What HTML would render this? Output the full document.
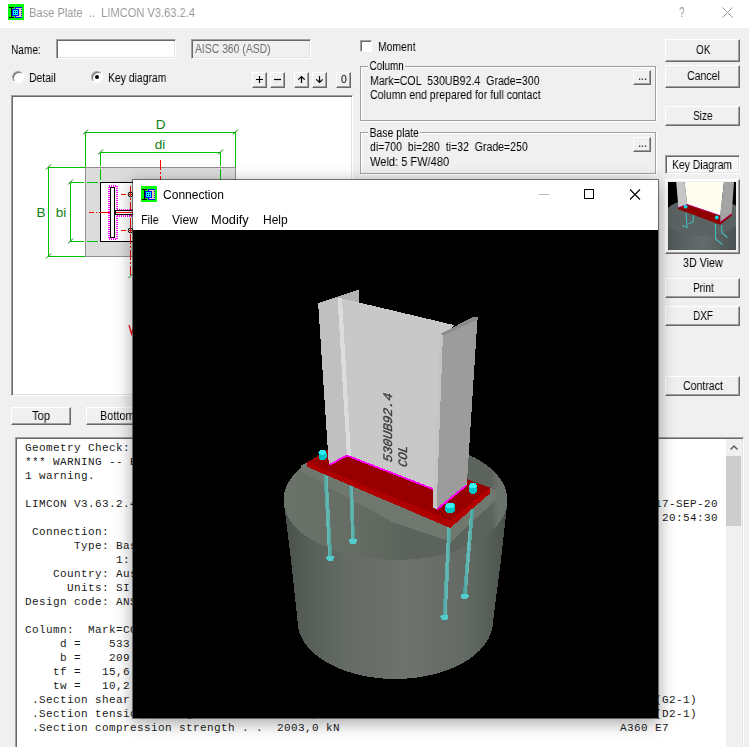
<!DOCTYPE html>
<html>
<head>
<meta charset="utf-8">
<title>Base Plate .. LIMCON V3.63.2.4</title>
<style>
html,body{margin:0;padding:0;}
body{width:749px;height:747px;overflow:hidden;background:#f0f0f0;position:relative;font-family:"Liberation Sans",sans-serif;font-size:12.5px;color:#000;}
.abs{position:absolute;}
.t{position:absolute;white-space:pre;transform-origin:0 0;will-change:transform;}
#titlebar{left:0;top:0;width:749px;height:28px;background:#fff;}
.btn{position:absolute;box-sizing:border-box;background:#f0f0f0;
 border:1px solid;border-color:#fff #696969 #696969 #fff;box-shadow:inset -1px -1px 0 #a0a0a0, inset 1px 1px 0 #f0f0f0;}
.sunk{position:absolute;box-sizing:border-box;background:#fff;border:1px solid;border-color:#a0a0a0 #fff #fff #a0a0a0;box-shadow:inset 1px 1px 0 #696969, inset -1px -1px 0 #e3e3e3;}
.grp{position:absolute;box-sizing:border-box;border:1px solid #a0a0a0;box-shadow:1px 1px 0 #fff, inset 1px 1px 0 #fff;}
.radio{position:absolute;width:12px;height:12px;box-sizing:border-box;border-radius:50%;background:#fff;border:1px solid;border-color:#a0a0a0 #fff #fff #a0a0a0;box-shadow:inset 1px 1px 0 #696969;}
.mono{font-family:"Liberation Mono",monospace;font-size:11px;letter-spacing:0.399px;line-height:14px;white-space:pre;color:#1a1a1a;}
</style>
</head>
<body>
<!-- title bar -->
<div id="titlebar" class="abs"></div>
<svg class="abs" style="left:8px;top:4px" width="16" height="16" viewBox="0 0 16 16" shape-rendering="crispEdges">
<rect width="16" height="16" fill="#00ff00"/>
<rect x="7" y="3" width="7" height="11" fill="#0000ff"/>
<rect x="8" y="4" width="5" height="9" fill="#d8d0b0"/>
<rect x="13" y="4" width="1" height="1" fill="#d8d0b0"/><rect x="13" y="6" width="1" height="1" fill="#d8d0b0"/><rect x="13" y="8" width="1" height="1" fill="#d8d0b0"/><rect x="13" y="10" width="1" height="1" fill="#d8d0b0"/><rect x="13" y="12" width="1" height="1" fill="#d8d0b0"/>
<rect x="4" y="5" width="7" height="7" fill="#0000ff"/>
<rect x="5" y="6" width="5" height="5" fill="#00ffff"/>
<rect x="6" y="7" width="1" height="1" fill="#000080"/><rect x="8" y="7" width="1" height="1" fill="#000080"/><rect x="6" y="9" width="1" height="1" fill="#000080"/><rect x="8" y="9" width="1" height="1" fill="#000080"/>
<rect x="1" y="3" width="5" height="1" fill="#000"/><rect x="3" y="4" width="1" height="9" fill="#000"/><rect x="1" y="13" width="5" height="1" fill="#000"/>
</svg>
<svg class="abs" style="left:722px;top:7px" width="12" height="12"><path d="M0.5 0.5L10.5 10.5M10.5 0.5L0.5 10.5" stroke="#999" stroke-width="1" fill="none"/></svg>

<!-- row 1 -->
<div class="sunk" style="left:56px;top:39px;width:120px;height:20px"></div>
<div class="sunk" style="left:191px;top:39px;width:120px;height:20px;background:#f0f0f0"></div>

<!-- radios -->
<div class="radio" style="left:12px;top:71px"></div>
<div class="radio" style="left:91px;top:71px"></div>
<div class="abs" style="left:95px;top:75px;width:4px;height:4px;background:#000;border-radius:50%"></div>

<!-- small buttons -->
<div class="btn" style="left:252px;top:72px;width:15px;height:16px"></div>
<div class="btn" style="left:270px;top:72px;width:15px;height:16px"></div>
<div class="btn" style="left:294px;top:72px;width:15px;height:16px"></div>
<div class="btn" style="left:312px;top:72px;width:15px;height:16px"></div>
<div class="btn" style="left:336px;top:72px;width:15px;height:16px"></div>
<svg class="abs" style="left:252px;top:72px" width="100" height="16" viewBox="252 72 100 16">
<g stroke="#000" stroke-width="1.2" fill="none">
<path d="M256 79.500h7M259.500 76v7"/>
<path d="M274 79.500h7"/>
<path d="M301.500 76.500v6.500M298.300 79.700l3.200-3.200l3.200 3.200"/>
<path d="M319.500 76v6.500M316.300 79.300l3.200 3.200l3.200-3.200"/>
</g>
</svg>

<!-- drawing panel -->
<div class="sunk" style="left:11px;top:95px;width:342px;height:301px"></div>
<svg id="keydiag" class="abs" style="left:13px;top:97px" width="338" height="297" viewBox="13 97 338 297">
<g shape-rendering="crispEdges" fill="none">
<rect x="85.500" y="167.500" width="150" height="89" fill="#dcdcdc" stroke="#909090"/>
<rect x="100.500" y="182.500" width="120" height="59" fill="#fff" stroke="#000"/>
<g stroke="#00c000">
<path d="M85 132.500H236M85.500 132V167M235.500 132V167"/>
<path d="M100 152.500H221M100.500 152V166M220.500 152V166M100.500 169V180M220.500 169V180"/>
<path d="M48.500 167V257M48 167.500H85M48 256.500H85"/>
<path d="M70.500 182V242M70 182.500H84M70 241.500H84M87 182.500H98M87 241.500H98"/>
</g>
<g stroke="#ff0000">
<path d="M160.500 160V300" stroke-dasharray="10 2 2 2"/>
<path d="M89 212.500H240" stroke-dasharray="5 2 1 2 30 2 1 2"/>
<path d="M130.500 186V275" stroke-dasharray="10 2 2 2"/>
<path d="M121 194.500H126M121 230.500H126"/>
</g>
<rect x="108.500" y="185.500" width="8" height="53" stroke="#ff00ff" stroke-width="2" stroke-dasharray="1 1"/>
<path d="M117 209.500H133M117 215.500H133" stroke="#ff00ff" stroke-width="2" stroke-dasharray="1 1"/>
<rect x="110.500" y="187.500" width="4" height="50" fill="#fff" stroke="#000"/>
<rect x="115" y="210.500" width="20" height="4" fill="#fff" stroke="#000"/>
<path d="M116 212.500H133" stroke="#ff0000"/>
</g>
<g fill="none" stroke="#000" stroke-width="1">
<circle cx="130.500" cy="194.500" r="2.300"/><circle cx="130.500" cy="230.500" r="2.300"/>
</g>
<g fill="none" stroke="#ff0000" stroke-width="1" shape-rendering="crispEdges"><path d="M129 194.500h3M129 230.500h3M130.500 193v3M130.500 229v3"/></g>
<g stroke="#008000" stroke-width="1" fill="none">
<path d="M83 134.500l5-5M233 134.500l5-5M98 154.500l5-5M218 154.500l5-5M46 169.500l5-5M46 258.500l5-5M68 184.500l5-5M68 243.500l5-5M128.500 278l4-4"/>
</g>
<path d="M129 325l2.500 9l2.500-9" stroke="#ff0000" stroke-width="1.200" fill="none"/>
<g font-family="Liberation Sans, sans-serif" font-size="13.500" fill="#108010" text-anchor="middle">
<text x="160.500" y="129">D</text>
<text x="160" y="149">di</text>
<text x="41" y="217">B</text>
<text x="61" y="217">bi</text>
</g>
</svg>

<!-- right side -->
<div class="abs" style="left:360px;top:40px;width:12px;height:12px;box-sizing:border-box;background:#fff;border:1px solid;border-color:#a0a0a0 #fff #fff #a0a0a0;box-shadow:inset 1px 1px 0 #696969"></div>
<div class="grp" style="left:360px;top:66px;width:296px;height:55px"></div>
<div class="btn" style="left:633px;top:70px;width:18px;height:15px"></div>
<div class="grp" style="left:360px;top:132px;width:296px;height:42px"></div>
<div class="btn" style="left:633px;top:137px;width:18px;height:15px"></div>

<div class="btn" style="left:665px;top:39px;width:75px;height:23px"></div>
<div class="btn" style="left:665px;top:65px;width:75px;height:23px"></div>
<div class="btn" style="left:665px;top:106px;width:75px;height:20px"></div>
<div class="sunk" style="left:665px;top:155px;width:75px;height:19px;background:#f8f8f8"></div>
<div class="btn" style="left:665px;top:179px;width:75px;height:75px;box-shadow:inset -1px -1px 0 #a0a0a0, inset 1px 1px 0 #fff, inset 2px 2px 0 #f0f0f0"></div>
<svg class="abs" style="left:668px;top:182px" width="68" height="68" viewBox="0 0 68 68">
<defs><linearGradient id="tc" x1="0" y1="0" x2="68" y2="0" gradientUnits="userSpaceOnUse"><stop offset="0" stop-color="#505656"/><stop offset="0.5" stop-color="#646c6c"/><stop offset="1" stop-color="#4c5252"/></linearGradient></defs>
<rect width="68" height="68" fill="#000"/>
<path d="M0 26C4 22 8 20.500 12 20L56 20C62 21 65 22 68 23.500V68H0Z" fill="#5a6262"/>
<path d="M0 44C10 52 30 56 50 52C58 50 64 47 68 44V68H0Z" fill="url(#tc)"/>
<g stroke="#40c8c8" stroke-width="1.100" fill="none" opacity="0.900">
<path d="M18 30.500L19 45.500L14 43.500"/>
<path d="M25.500 33L25 40L20.500 42"/>
<path d="M47.500 42L47.500 57L54.500 62.500"/>
<path d="M53.500 43L54 51L59.500 55.500"/>
</g>
<polygon points="8.200,0 16.500,0 19.200,22.300 10.400,25.500" fill="#c6c6c6"/>
<polygon points="16.500,0 56,0 52.200,33.500 19.200,22.300" fill="#fffcf0"/>
<polygon points="56,0 66,0 63.700,31.500 52.200,40 52.200,33.500" fill="#a4a4a4"/>
<polygon points="9.900,25.800 19.200,22.300 52.200,33.500 52.200,40 63.700,31.500 63.700,33.500 52.200,42.800 9.900,27" fill="#8e0000"/>
<path d="M10.400 25.500L19.200 22.300L52.200 33.500M52.200 40L63.700 31.500" stroke="#ff00ff" stroke-width="0.800" stroke-dasharray="1 1" fill="none"/>
<circle cx="17.600" cy="24.700" r="1.900" fill="#00e0e0"/>
<circle cx="48.800" cy="35.500" r="1.900" fill="#00e0e0"/>
</svg>
<div class="btn" style="left:665px;top:278px;width:75px;height:20px"></div>
<div class="btn" style="left:665px;top:306px;width:75px;height:20px"></div>
<div class="btn" style="left:665px;top:376px;width:75px;height:20px"></div>

<div class="btn" style="left:11px;top:407px;width:60px;height:18px"></div>
<div class="btn" style="left:86px;top:407px;width:60px;height:18px"></div>
<div class="t" style="left:29.00px;top:5.84px;font-size:12px;line-height:14px;height:14px;transform:scaleX(0.9252);color:#999;">Base Plate  ..  LIMCON V3.63.2.4</div>
<div class="t" style="left:679.40px;top:3.65px;font-size:14px;line-height:17px;height:17px;transform:scaleX(0.7320);color:#999;">?</div>
<div class="t" style="left:11.40px;top:43.17px;font-size:12.5px;line-height:15px;height:15px;transform:scaleX(0.8067);">Name:</div>
<div class="t" style="left:194.50px;top:42.17px;font-size:12.5px;line-height:15px;height:15px;transform:scaleX(0.8308);color:#6d6d6d;">AISC 360 (ASD)</div>
<div class="t" style="left:29.20px;top:71.17px;font-size:12.5px;line-height:15px;height:15px;transform:scaleX(0.8324);">Detail</div>
<div class="t" style="left:108.00px;top:71.17px;font-size:12.5px;line-height:15px;height:15px;transform:scaleX(0.8309);">Key diagram</div>
<div class="t" style="left:340.70px;top:72.86px;font-size:10.5px;line-height:13px;height:13px;transform:scaleX(0.9589);">0</div>
<div class="t" style="left:377.60px;top:40.17px;font-size:12.5px;line-height:15px;height:15px;transform:scaleX(0.8306);">Moment</div>
<div class="t" style="left:370.00px;top:59.17px;font-size:12.5px;line-height:15px;height:15px;transform:scaleX(0.7941);background:#f0f0f0;padding:0 2px;margin-left:-2px;">Column</div>
<div class="t" style="left:369.90px;top:74.17px;font-size:12.5px;line-height:15px;height:15px;transform:scaleX(0.8495);">Mark=COL  530UB92.4  Grade=300</div>
<div class="t" style="left:369.90px;top:88.17px;font-size:12.5px;line-height:15px;height:15px;transform:scaleX(0.8438);">Column end prepared for full contact</div>
<div class="t" style="left:370.00px;top:126.17px;font-size:12.5px;line-height:15px;height:15px;transform:scaleX(0.8330);background:#f0f0f0;padding:0 2px;margin-left:-2px;">Base plate</div>
<div class="t" style="left:369.90px;top:140.17px;font-size:12.5px;line-height:15px;height:15px;transform:scaleX(0.8441);">di=700  bi=280  ti=32  Grade=250</div>
<div class="t" style="left:369.90px;top:155.17px;font-size:12.5px;line-height:15px;height:15px;transform:scaleX(0.8850);">Weld: 5 FW/480</div>
<div class="t" style="left:638.00px;top:69.17px;font-size:12.5px;line-height:15px;height:15px;transform:scaleX(0.8639);">...</div>
<div class="t" style="left:638.00px;top:136.17px;font-size:12.5px;line-height:15px;height:15px;transform:scaleX(0.8639);">...</div>
<div class="t" style="left:695.50px;top:43.17px;font-size:12.5px;line-height:15px;height:15px;transform:scaleX(0.7973);">OK</div>
<div class="t" style="left:686.50px;top:69.17px;font-size:12.5px;line-height:15px;height:15px;transform:scaleX(0.8430);">Cancel</div>
<div class="t" style="left:692.50px;top:109.17px;font-size:12.5px;line-height:15px;height:15px;transform:scaleX(0.8102);">Size</div>
<div class="t" style="left:672.40px;top:158.17px;font-size:12.5px;line-height:15px;height:15px;transform:scaleX(0.8305);">Key Diagram</div>
<div class="t" style="left:682.70px;top:256.17px;font-size:12.5px;line-height:15px;height:15px;transform:scaleX(0.8571);">3D View</div>
<div class="t" style="left:692.50px;top:281.17px;font-size:12.5px;line-height:15px;height:15px;transform:scaleX(0.8093);">Print</div>
<div class="t" style="left:692.50px;top:309.17px;font-size:12.5px;line-height:15px;height:15px;transform:scaleX(0.8040);">DXF</div>
<div class="t" style="left:682.50px;top:379.17px;font-size:12.5px;line-height:15px;height:15px;transform:scaleX(0.8447);">Contract</div>
<div class="t" style="left:32.00px;top:409.17px;font-size:12.5px;line-height:15px;height:15px;transform:scaleX(0.8932);">Top</div>
<div class="t" style="left:99.50px;top:409.17px;font-size:12.5px;line-height:15px;height:15px;transform:scaleX(0.8713);">Bottom</div>
<!-- text area -->
<div class="sunk" style="left:15px;top:437px;width:729px;height:320px"></div>
<div class="abs" style="left:726px;top:439px;width:16px;height:310px;background:#f0f0f0"></div>
<div class="abs" style="left:726px;top:456px;width:15px;height:70px;background:#cdcdcd"></div>
<svg class="abs" style="left:726px;top:439px" width="16" height="17"><path d="M4.500 10.500L8 7L11.500 10.500" stroke="#606060" stroke-width="1.500" fill="none"/></svg>
<div id="txt" class="abs mono" style="left:25px;top:441px">Geometry Check:
*** WARNING -- Edge distance is less than minimum.
1 warning.

LIMCON V3.63.2.4                                                                          17-SEP-20
                                                                                           20:54:30
 Connection:
       Type: Base plate
             1: Column
    Country: Australia
      Units: SI
Design code: ANSI/AISC 360

Column:  Mark=COL  530UB92.4  Grade=300
     d =    533
     b =    209
    tf =   15,6
    tw =   10,2
 .Section shear strength . . . . .    939,0 kN                                            (G2-1)
 .Section tension strength . . . .   2120,0 kN                                            (D2-1)
 .Section compression strength . .  2003,0 kN                                        A360 E7
</div>
<!-- CONNECTION WINDOW -->
<div id="conn" class="abs" style="left:133px;top:180px;width:525px;height:538px;background:#000;box-shadow:0 0 0 1px rgba(40,40,40,0.6), 0 4px 16px 1px rgba(0,0,0,0.36)"></div>
<div class="abs" style="left:133px;top:180px;width:525px;height:50px;background:#fff"></div>
<svg class="abs" style="left:141px;top:186px" width="16" height="16" viewBox="0 0 16 16" shape-rendering="crispEdges">
<rect width="16" height="16" fill="#00ff00"/>
<rect x="7" y="3" width="7" height="11" fill="#0000ff"/>
<rect x="8" y="4" width="5" height="9" fill="#d8d0b0"/>
<rect x="13" y="4" width="1" height="1" fill="#d8d0b0"/><rect x="13" y="6" width="1" height="1" fill="#d8d0b0"/><rect x="13" y="8" width="1" height="1" fill="#d8d0b0"/><rect x="13" y="10" width="1" height="1" fill="#d8d0b0"/><rect x="13" y="12" width="1" height="1" fill="#d8d0b0"/>
<rect x="4" y="5" width="7" height="7" fill="#0000ff"/>
<rect x="5" y="6" width="5" height="5" fill="#00ffff"/>
<rect x="6" y="7" width="1" height="1" fill="#000080"/><rect x="8" y="7" width="1" height="1" fill="#000080"/><rect x="6" y="9" width="1" height="1" fill="#000080"/><rect x="8" y="9" width="1" height="1" fill="#000080"/>
<rect x="1" y="3" width="5" height="1" fill="#000"/><rect x="3" y="4" width="1" height="9" fill="#000"/><rect x="1" y="13" width="5" height="1" fill="#000"/>
</svg>
<svg class="abs" style="left:520px;top:180px" width="138" height="28">
<path d="M19 14.500H29" stroke="#bbb" fill="none"/>
<rect x="64.500" y="9.500" width="9" height="9" stroke="#000" fill="none"/>
<path d="M110 9.500L120 19.500M120 9.500L110 19.500" stroke="#000" stroke-width="1.100" fill="none"/>
</svg>
<div class="t" style="left:162.70px;top:187.84px;font-size:12px;line-height:14px;height:14px;transform:scaleX(1.0031);">Connection</div>
<div class="t" style="left:140.60px;top:212.84px;font-size:12px;line-height:14px;height:14px;transform:scaleX(0.9102);">File</div>
<div class="t" style="left:172.00px;top:212.84px;font-size:12px;line-height:14px;height:14px;transform:scaleX(0.9848);">View</div>
<div class="t" style="left:211.30px;top:212.84px;font-size:12px;line-height:14px;height:14px;transform:scaleX(1.0667);">Modify</div>
<div class="t" style="left:263.40px;top:212.84px;font-size:12px;line-height:14px;height:14px;transform:scaleX(0.9846);">Help</div>
<svg id="scene" class="abs" style="left:133px;top:230px" width="525" height="488" viewBox="133 230 525 488">
<defs>
<linearGradient id="cside" x1="284" y1="0" x2="507" y2="0" gradientUnits="userSpaceOnUse">
<stop offset="0" stop-color="#484e48"/><stop offset="0.08" stop-color="#555b55"/><stop offset="0.27" stop-color="#646a64"/><stop offset="0.55" stop-color="#6e746c"/><stop offset="0.80" stop-color="#646a64"/><stop offset="0.93" stop-color="#565c56"/><stop offset="1" stop-color="#4a504a"/>
</linearGradient>
<linearGradient id="rod" x1="0" y1="0" x2="1" y2="0">
<stop offset="0" stop-color="#489a96"/><stop offset="0.5" stop-color="#66bcb8"/><stop offset="1" stop-color="#489a96"/>
</linearGradient>
<linearGradient id="ctop" x1="284" y1="0" x2="507" y2="0" gradientUnits="userSpaceOnUse">
<stop offset="0" stop-color="#6a726a"/><stop offset="0.25" stop-color="#666e66"/><stop offset="0.48" stop-color="#5f675f"/><stop offset="0.55" stop-color="#5b635c"/><stop offset="0.93" stop-color="#5b635c"/><stop offset="0.96" stop-color="#6a726b"/><stop offset="1" stop-color="#6a726b"/>
</linearGradient>
</defs>
<g shape-rendering="crispEdges">
<!-- concrete cylinder -->
<path d="M283.500 500L286 520L291 560L297.600 621.500L298.1 627.5L299.7 633.5L302.4 639.3L306.0 644.9L310.7 650.2L316.3 655.3L322.7 660.0L329.9 664.2L337.9 668.0L346.5 671.3L355.6 674.0L365.1 676.2L375.0 677.7L385.1 678.7L395.3 679.0L405.5 678.7L415.6 677.7L425.5 676.2L435.0 674.0L444.2 671.3L452.7 668.0L460.7 664.2L467.9 660.0L474.3 655.3L479.9 650.2L484.6 644.9L488.2 639.3L490.9 633.5L492.5 627.5L493.0 621.5L501 560L506 515L507.500 500Z" fill="url(#cside)"/>
<ellipse cx="395.500" cy="500" rx="112" ry="60" fill="url(#ctop)"/>
<polygon points="300.500,466 307.400,462.200 450.200,520.300 489.900,487.600 497,491 497,499 470,524 452,541 442.500,539 394,523 330,487.700 300.500,471" fill="#6f776f"/>
<!-- anchor rods -->
<g fill="url(#rod)">
<polygon points="323.200,468 327.200,468 332.200,557 328.200,557"/>
<polygon points="349,480 352.800,480 355,540 351.200,540"/>
<polygon points="447.400,527 451.400,527 446.600,616 442.600,616"/>
<polygon points="470.500,508 474.300,508 466.600,595 462.800,595"/>
</g>
<g fill="#52cccc">
<path d="M327 555.500h6.500l1 2.500l-2 3h-4.500l-2-3z"/>
<path d="M349.800 538.500h6.500l1 2.500l-2 3h-4.500l-2-3z"/>
<path d="M441.200 614.500h6.500l1 2.500l-2 3h-4.500l-2-3z"/>
<path d="M461.400 593.500h6.500l1 2.500l-2 3h-4.500l-2-3z"/>
</g>
<!-- plate -->
<polygon points="307.400,462.200 307.400,467 450.200,528 450.200,520.300" fill="#ae0000"/>
<polygon points="450.200,520.300 450.200,528 489.900,493.500 489.900,487.600" fill="#b40000"/>
<polygon points="307.400,462.200 450.200,520.300 489.900,487.600 350,436" fill="#980000"/>
<!-- bolts -->
<g>
<path d="M318.500 452.500l2-2.500h4l2 2.500v5l-2 2.500h-4l-2-2.500z" fill="#00c4c4"/>
<ellipse cx="322.500" cy="452.500" rx="3.600" ry="2.300" fill="#30f0f0"/>
<path d="M445 505l2.500-2.500h5l2.500 2.500v5.500l-2.500 2.500h-5l-2.500-2.500z" fill="#00c8c8"/>
<ellipse cx="450" cy="505.300" rx="4.400" ry="2.600" fill="#38f4f4"/>
<path d="M468.700 485.500l2.200-2.500h4.200l2.200 2.500v5.500l-2.200 2.500h-4.200l-2.200-2.500z" fill="#00c8c8"/>
<ellipse cx="473" cy="485.800" rx="3.900" ry="2.400" fill="#38f4f4"/>
</g>
<!-- column -->
<polygon points="318.100,303 358.900,289.400 358.900,303 337.500,298.500" fill="#b2b2b2"/>
<polygon points="318.100,303 338,297.400 348,455.500 328.800,464.800" fill="#c0c0c0"/>
<polygon points="337.500,297.400 453.800,325 445,340 438,490.800 346.900,455.500" fill="#c8c8c8"/>
<polygon points="337.500,297.400 342,298.500 351,457.100 346.900,455.500" fill="#dcdcdc"/>
<polygon points="440.200,333.900 477.600,317 466.800,485 436.600,509.300 432.600,507.500" fill="#9c9c9c"/>
<polygon points="440.200,333.900 443,333 436.600,509.300 432.600,507.500" fill="#c4c4c4"/>
<polygon points="440.200,333.900 473.500,316.800 477.600,317.600 477.600,319.600 443.200,335.200" fill="#8a8a8a"/>
<!-- weld lines -->
<g stroke="#ff00ff" stroke-width="1.800" fill="none">
<path d="M329.500 464.800L346.900 455.500L433 489"/>
<path d="M437 509.300L466.800 485"/>
</g>
</g>
<!-- labels -->
<g font-family="Liberation Mono, monospace" font-style="italic" fill="#3c3c3c">
<text transform="translate(392 462.500) rotate(-90) skewX(-10)" font-size="13" stroke="#3c3c3c" stroke-width="0.35" textLength="69" lengthAdjust="spacingAndGlyphs">530UB92.4</text>
<text transform="translate(406.500 467.500) rotate(-90) skewX(-10)" font-size="13" stroke="#3c3c3c" stroke-width="0.35" textLength="21.500" lengthAdjust="spacingAndGlyphs">COL</text>
</g>
</svg>
</body>
</html>
